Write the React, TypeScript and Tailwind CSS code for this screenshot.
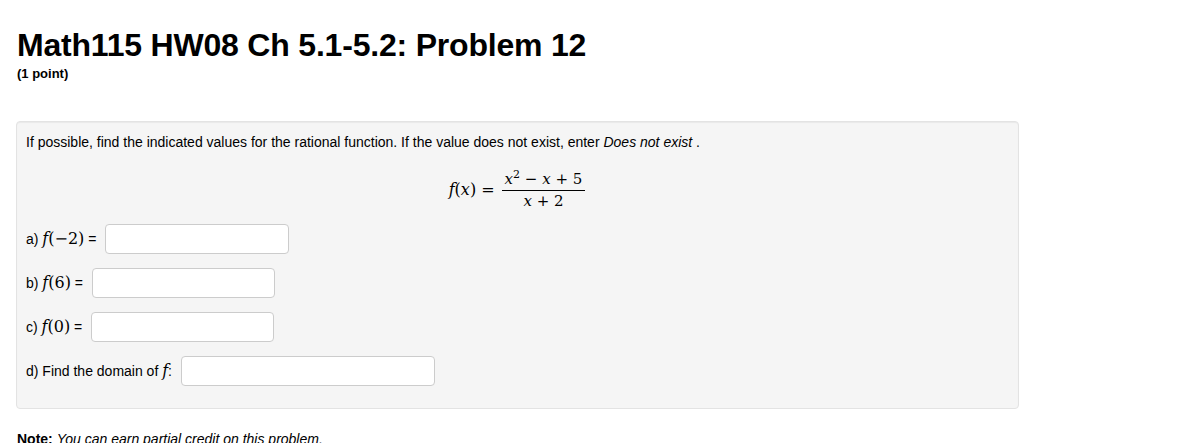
const mathFont = { fontFamily: '"DejaVu Serif", "Liberation Serif", serif' };

const MathF: React.FC<{ arg: string }> = ({ arg }) => (
  <span style={mathFont} className="text-[16px] text-black">
    <i>f</i>({arg})
  </span>
);

const AnswerInput: React.FC<{ width: string }> = ({ width }) => (
  <input
    type="text"
    className={`${width} h-[30px] rounded-[4px] border border-[#cccccc] bg-white px-2 outline-none`}
  />
);

export default function App() {
  return (
    <div
      className="min-h-[443px] bg-white pl-[17px] pt-[24px] text-[#333333]"
      style={{ fontFamily: '"Liberation Sans", Arial, sans-serif' }}
    >
      <h1 className="text-[32px] font-bold leading-[42px] tracking-[-0.2px] text-black">
        Math115 HW08 Ch 5.1-5.2: Problem 12
      </h1>
      <p className="-mt-[2px] text-[13px] font-bold text-black">(1 point)</p>

      <div className="-ml-[1px] mt-[37px] w-[1003px] rounded-[4px] border border-[#e3e3e3] bg-[#f5f5f5] pb-[22px] pl-[9px] pr-[10px] pt-[10px] shadow-[inset_0_1px_1px_rgba(0,0,0,0.05)]">
        <p className="text-[14px] leading-[20px] text-black">
          If possible, find the indicated values for the rational function. If the value does not exist, enter{' '}
          <i>Does not exist</i> .
        </p>

        {/* displayed equation */}
        <div className="mt-[19px] flex items-center justify-center" style={mathFont}>
          <span className="text-[16px] text-black">
            <i>f</i>(<i>x</i>) =
          </span>
          <div className="ml-[7px] flex flex-col items-center text-[15px] leading-[17px] text-black">
            <span className="px-[3px] pb-[2px]">
              <i>x</i>
              <sup className="text-[11px]">2</sup> − <i>x</i> + 5
            </span>
            <span className="h-px w-full bg-black" />
            <span className="pt-[2px]">
              <i>x</i> + 2
            </span>
          </div>
        </div>

        <div className="mt-[14px] flex flex-col gap-[14px] text-[14px] text-black">
          <div className="flex items-center gap-[9px]">
            <span>
              a) <MathF arg="−2" /> =
            </span>
            <AnswerInput width="w-[184px]" />
          </div>
          <div className="flex items-center gap-[9px]">
            <span>
              b) <MathF arg="6" /> =
            </span>
            <AnswerInput width="w-[183px]" />
          </div>
          <div className="flex items-center gap-[9px]">
            <span>
              c) <MathF arg="0" /> =
            </span>
            <AnswerInput width="w-[183px]" />
          </div>
          <div className="flex items-center gap-[9px]">
            <span>
              d) Find the domain of{' '}
              <i style={mathFont} className="text-[16px]">
                f
              </i>
              :
            </span>
            <AnswerInput width="w-[254px]" />
          </div>
        </div>
      </div>

      <p className="mt-[20px] text-[14px] text-black">
        <b>Note:</b> <i>You can earn partial credit on this problem.</i>
      </p>
    </div>
  );
}
